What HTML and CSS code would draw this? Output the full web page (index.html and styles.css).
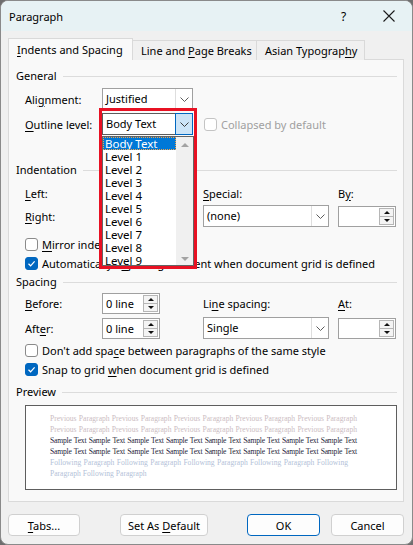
FILE: index.html
```html
<!DOCTYPE html>
<html lang="en">
<head>
  <meta charset="UTF-8">
  <meta name="viewport" content="width=device-width, initial-scale=1.0">
  <title>Paragraph</title>

  <!-- Dialog styling -->
  <link rel="stylesheet" href="styles.css">
</head>
<body>

  <div class="dialog">
    <!-- Title bar -->
    <div class="titlebar">
      <span class="title">Paragraph</span>
      <span class="help">?</span>
      <span class="close">
        <svg width="12" height="12" viewBox="0 0 12 12"><path d="M0.5 0.5 L11.5 11.5 M11.5 0.5 L0.5 11.5" stroke="#1b1b1b" stroke-width="1.1" fill="none"/></svg>
      </span>
    </div>

    <div class="content">
      <!-- Tab strip -->
      <div class="tabs">
        <div class="tab tab-indents active"><u>I</u>ndents and Spacing</div>
        <div class="tab tab-breaks">Line and <u>P</u>age Breaks</div>
        <div class="tab tab-asian">Asian Typograp<u>h</u>y</div>
      </div>

      <div class="panel">
        <!-- General -->
        <div class="legend">General</div>
        <div class="row row-align">
          <label class="lbl">Ali<u>g</u>nment:</label>
          <div class="select select-short">
            <span class="value">Justified</span>
            <span class="drop"><svg width="9" height="5" viewBox="0 0 9 5"><path d="M0.5 0.5 L4.5 4.5 L8.5 0.5" stroke="#5c5c5c" fill="none"/></svg></span>
          </div>
        </div>
        <div class="row row-outline">
          <label class="lbl"><u>O</u>utline level:</label>
          <div class="outline-wrap">
            <div class="select select-short open">
              <span class="value">Body Text</span>
              <span class="drop"><svg width="9" height="5" viewBox="0 0 9 5"><path d="M0.5 0.5 L4.5 4.5 L8.5 0.5" stroke="#3c3c3c" fill="none"/></svg></span>
            </div>

            <!-- Open drop-down list -->
            <div class="listbox">
              <ul>
                <li class="selected">Body Text</li>
                <li>Level 1</li>
                <li>Level 2</li>
                <li>Level 3</li>
                <li>Level 4</li>
                <li>Level 5</li>
                <li>Level 6</li>
                <li>Level 7</li>
                <li>Level 8</li>
                <li>Level 9</li>
              </ul>
              <div class="scroll">
                <span class="arrow-up"></span>
                <span class="arrow-down"></span>
              </div>
            </div>
            <div class="marker"></div>
          </div>
          <div class="check disabled collapsed"><span class="box"></span><span>Collapsed by default</span></div>
        </div>

        <!-- Indentation -->
        <div class="legend legend-indent">Indentation</div>
        <div class="grid grid-indent">
          <label class="lbl"><u>L</u>eft:</label>
          <div class="spin"><span class="value"></span><span class="spin-btns"><span class="spin-up"></span><span class="spin-down"></span></span></div>
          <label class="lbl"><u>S</u>pecial:</label>
          <label class="lbl">B<u>y</u>:</label>

          <label class="lbl"><u>R</u>ight:</label>
          <div class="spin"><span class="value"></span><span class="spin-btns"><span class="spin-up"></span><span class="spin-down"></span></span></div>
          <div class="select select-wide">
            <span class="value">(none)</span>
            <span class="drop"><svg width="9" height="5" viewBox="0 0 9 5"><path d="M0.5 0.5 L4.5 4.5 L8.5 0.5" stroke="#5c5c5c" fill="none"/></svg></span>
          </div>
          <div class="spin"><span class="value"></span><span class="spin-btns"><span class="spin-up"></span><span class="spin-down"></span></span></div>
        </div>
        <div class="check row-check check-mirror"><span class="box"></span><span><u>M</u>irror indents</span></div>
        <div class="check row-check checked check-auto"><span class="box"><svg width="11" height="11" viewBox="0 0 11 11"><path d="M2.5 5.8 L4.6 7.8 L8.6 3.4" stroke="#fff" stroke-width="1.2" fill="none"/></svg></span><span>Automatically a<u>d</u>just right indent when document grid is defined</span></div>

        <!-- Spacing -->
        <div class="legend legend-spacing">Spacing</div>
        <div class="grid grid-spacing">
          <label class="lbl"><u>B</u>efore:</label>
          <div class="spin"><span class="value">0 line</span><span class="spin-btns"><span class="spin-up"></span><span class="spin-down"></span></span></div>
          <label class="lbl">Li<u>n</u>e spacing:</label>
          <label class="lbl"><u>A</u>t:</label>

          <label class="lbl">Aft<u>e</u>r:</label>
          <div class="spin"><span class="value">0 line</span><span class="spin-btns"><span class="spin-up"></span><span class="spin-down"></span></span></div>
          <div class="select select-wide">
            <span class="value">Single</span>
            <span class="drop"><svg width="9" height="5" viewBox="0 0 9 5"><path d="M0.5 0.5 L4.5 4.5 L8.5 0.5" stroke="#5c5c5c" fill="none"/></svg></span>
          </div>
          <div class="spin"><span class="value"></span><span class="spin-btns"><span class="spin-up"></span><span class="spin-down"></span></span></div>
        </div>
        <div class="check row-check check-space"><span class="box"></span><span>Don't add spa<u>c</u>e between paragraphs of the same style</span></div>
        <div class="check row-check checked check-snap"><span class="box"><svg width="11" height="11" viewBox="0 0 11 11"><path d="M2.5 5.8 L4.6 7.8 L8.6 3.4" stroke="#fff" stroke-width="1.2" fill="none"/></svg></span><span>Snap to grid <u>w</u>hen document grid is defined</span></div>

        <!-- Preview -->
        <div class="legend legend-preview">Preview</div>
        <div class="preview">
          <div class="ptext">
            <div class="pline prev full">Previous Paragraph Previous Paragraph Previous Paragraph Previous Paragraph Previous Paragraph</div>
            <div class="pline prev full">Previous Paragraph Previous Paragraph Previous Paragraph Previous Paragraph Previous Paragraph</div>
            <div class="pline sample full">Sample Text Sample Text Sample Text Sample Text Sample Text Sample Text Sample Text Sample Text</div>
            <div class="pline sample full">Sample Text Sample Text Sample Text Sample Text Sample Text Sample Text Sample Text Sample Text</div>
            <div class="pline next full short">Following Paragraph Following Paragraph Following Paragraph Following Paragraph Following</div>
            <div class="pline next">Paragraph Following Paragraph</div>
          </div>
        </div>
      </div>

      <!-- Dialog buttons -->
      <div class="buttons">
        <button class="btn btn-tabs"><u>T</u>abs...</button>
        <button class="btn btn-default">Set As <u>D</u>efault</button>
        <button class="btn btn-ok">OK</button>
        <button class="btn btn-cancel">Cancel</button>
      </div>
    </div>
  </div>

</body>
</html>
```

FILE: styles.css
```css
/* Base */
* {
  box-sizing: border-box;
}

html {
  background: #6e6e6e;
}

body {
  margin: 0;
  font-family: "Noto Sans", "Segoe UI", sans-serif;
  font-size: 11px;
  color: #000;
}

u {
  text-decoration-thickness: 1px;
  text-underline-offset: 2px;
}

/* Window frame */
.dialog {
  width: 413px;
  height: 545px;
  background: #f0f0f0;
  border: 1px solid #8a8a8a;
  border-radius: 8px;
  overflow: hidden;
}

/* Title bar */
.titlebar {
  height: 30px;
  display: flex;
  align-items: center;
  background: #e7f2f4;
}

.title {
  padding-left: 8px;
}

.help {
  margin-left: auto;
  width: 45px;
  text-align: center;
  font-size: 12px;
}

.close {
  width: 46px;
  display: flex;
  justify-content: center;
}

.content {
  padding: 7px 8px 0 7px;
}

/* Tabs */
.tabs {
  display: flex;
  align-items: flex-start;
  height: 22px;
}

.tab {
  height: 20px;
  margin-top: 2px;
  margin-left: -1px;
  padding: 1px 0 0 8px;
  line-height: 18px;
  border: 1px solid #d9d9d9;
  border-bottom: none;
  background: #f0f0f0;
  white-space: nowrap;
}

.tab.active {
  position: relative;
  z-index: 1;
  height: 22px;
  margin-top: 0;
  margin-left: 0;
  padding-top: 2px;
  background: #f9f9f9;
}

.tab-indents { width: 125px; }
.tab-breaks  { width: 125px; }
.tab-asian   { width: 109px; }

/* Tab page */
.panel {
  margin-top: -1px;
  padding: 8px 6px 11px 7px;
  background: #f9f9f9;
  border: 1px solid #dadada;
}

.legend {
  display: flex;
  align-items: center;
  height: 16px;
  line-height: 16px;
}

.legend::after {
  content: "";
  flex: 1;
  height: 1px;
  margin-left: 6px;
  background: #dcdcdc;
}

.legend-indent  { margin-top: 27px; }
.legend-spacing { margin-top: 2px; }
.legend-preview { margin-top: 6px; }

.row {
  display: flex;
  align-items: center;
  height: 22px;
  margin-left: 9px;
}

.row-align   { margin-top: 4px; }
.row-outline { margin-top: 3px; }

.lbl {
  width: 77px;
  flex-shrink: 0;
  white-space: nowrap;
}

/* Combo boxes */
.select {
  display: flex;
  height: 22px;
  background: #fff;
  border: 1px solid #a0a0a0;
}

.select .value {
  flex: 1;
  padding-left: 3px;
  line-height: 20px;
}

.select .drop {
  width: 17px;
  display: flex;
  align-items: center;
  justify-content: center;
  border-left: 1px solid #dedede;
}

.select-short { width: 91px; }
.select-wide  { width: 126px; }

.select.open {
  border-color: #5c5c5c;
}

.select.open .drop {
  background: #cce4f7;
  border: 1px solid #0067c0;
  margin: -1px -1px -1px 0;
  width: 18px;
}

/* Outline level drop-down */
.outline-wrap {
  position: relative;
  width: 91px;
}

.listbox {
  position: absolute;
  z-index: 2;
  left: 0;
  top: 23px;
  width: 92px;
  height: 130px;
  display: flex;
  background: #fff;
  border: 1px solid #646464;
}

.listbox ul {
  flex: 1;
  margin: 0;
  padding: 0;
  list-style: none;
}

.listbox li {
  height: 13px;
  line-height: 13px;
  padding-left: 2px;
  font-size: 11.5px;
  white-space: nowrap;
}

.listbox li.selected {
  background: #0078d7;
  color: #fff;
  outline: 1px dotted #f3a34a;
  outline-offset: -1px;
}

.scroll {
  width: 17px;
  display: flex;
  flex-direction: column;
  justify-content: space-between;
  align-items: center;
  padding: 6px 0 4px;
  background: #f0f0f0;
}

.arrow-up {
  border-left: 4px solid transparent;
  border-right: 4px solid transparent;
  border-bottom: 4px solid #a3a3a3;
}

.arrow-down {
  border-left: 4px solid transparent;
  border-right: 4px solid transparent;
  border-top: 4px solid #a3a3a3;
}

.marker {
  position: absolute;
  z-index: 3;
  left: -3px;
  top: -5px;
  width: 98px;
  height: 161px;
  border: 3px solid #e81123;
}

/* Spin boxes */
.spin {
  display: flex;
  width: 58px;
  height: 21px;
  background: #fff;
  border: 1px solid #a0a0a0;
}

.spin .value {
  flex: 1;
  padding-left: 3px;
  line-height: 19px;
}

.spin-btns {
  width: 16px;
  display: flex;
  flex-direction: column;
  padding: 1px 1px 1px 0;
}

.spin-up,
.spin-down {
  flex: 1;
  display: flex;
  align-items: center;
  justify-content: center;
  background: #f4f4f4;
  border: 1px solid #b6b6b6;
}

.spin-down {
  border-top: none;
}

.spin-up::before {
  content: "";
  border-left: 3px solid transparent;
  border-right: 3px solid transparent;
  border-bottom: 3px solid #111;
}

.spin-down::before {
  content: "";
  border-left: 3px solid transparent;
  border-right: 3px solid transparent;
  border-top: 3px solid #111;
}

/* Field grids */
.grid {
  display: grid;
  grid-template-columns: 77px 101px 135px 58px;
  align-items: center;
  margin-left: 9px;
}

.grid-indent {
  margin-top: 4px;
  grid-template-rows: 22px 22px;
  row-gap: 1px;
}

.grid-spacing {
  margin-top: 3px;
  grid-template-rows: 21px 22px;
  row-gap: 3px;
}

/* Check boxes */
.check {
  display: flex;
  align-items: center;
  height: 18px;
  white-space: nowrap;
}

.row-check {
  margin-left: 9px;
}

.check .box {
  width: 13px;
  height: 13px;
  margin-right: 4px;
  display: flex;
  align-items: center;
  justify-content: center;
  background: #fff;
  border: 1px solid #8a8a8a;
  border-radius: 3px;
}

.check.checked .box {
  background: #0067c0;
  border-color: #0067c0;
}

.check.disabled {
  color: #a0a0a0;
}

.check.disabled .box {
  border-color: #c4c4c4;
}

.collapsed    { margin-left: 11px; }
.check-mirror { margin-top: 8px; }
.check-auto   { margin-top: 1px; }
.check-space  { margin-top: 2px; }
.check-snap   { margin-top: 1px; }

/* Preview */
.preview {
  margin: 5px 0 0 9px;
  width: 372px;
  height: 85px;
  padding: 7px 0 0 24px;
  background: #fff;
  border: 1px solid #5e5e5e;
}

.ptext {
  width: 307px;
  font-family: "Liberation Serif", "Times New Roman", serif;
  font-size: 7.6px;
}

.pline {
  height: 11px;
  line-height: 11px;
  white-space: nowrap;
}

.pline.full {
  text-align: justify;
  text-align-last: justify;
}

.pline.short {
  width: 298px;
}

.prev   { color: #cbbcc2; }
.sample { color: #1f1f3a; letter-spacing: -0.2px; }
.next   { color: #b3bfd8; }

/* Buttons */
.buttons {
  display: flex;
  margin-top: 12px;
}

.btn {
  height: 22px;
  padding: 0;
  font-family: inherit;
  font-size: 11px;
  color: #000;
  background: #fdfdfd;
  border: 1px solid #d0d0d0;
  border-radius: 4px;
}

.btn-tabs    { width: 72px; }
.btn-default { width: 88px; margin-left: 40px; }
.btn-ok      { width: 73px; margin-left: auto; border-color: #0067c0; }
.btn-cancel  { width: 73px; margin-left: 11px; }
```
